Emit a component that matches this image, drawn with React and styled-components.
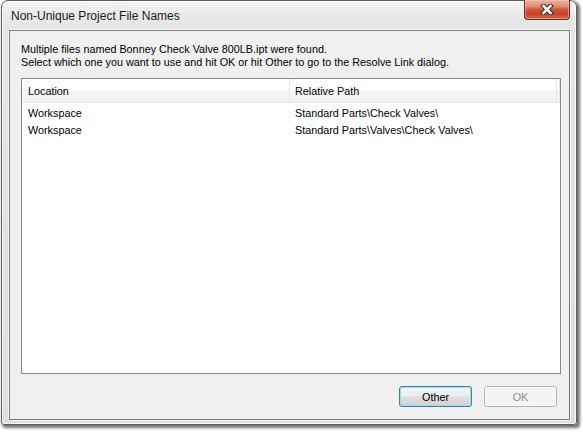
import React from 'react';
import styled, { createGlobalStyle } from 'styled-components';

const Global = createGlobalStyle`
  html, body { margin: 0; padding: 0; background: #ffffff; }
  body { font-family: "Liberation Sans", Arial, sans-serif; }
  * { box-sizing: border-box; }
`;

const Stage = styled.div`
  width: 583px;
  height: 432px;
  padding-left: 1px;
  overflow: hidden;
  background: #ffffff;
`;

const Window = styled.div`
  width: 576px;
  height: 425px;
  display: flex;
  flex-direction: column;
  border: 1px solid #5f5f5f;
  border-radius: 7px 7px 3px 3px;
  background: linear-gradient(#f4f4f4 0px, #e9e9e9 14px, #e4e4e4 30px, #dedede 100%);
  box-shadow: 2px 2px 3px 1px rgba(0, 0, 0, 0.55), inset 0 0 0 1px rgba(255, 255, 255, 0.85);
  padding: 0 6px 4px 7px;
`;

const TitleBar = styled.div`
  height: 29px;
  display: flex;
  align-items: flex-start;
  flex-shrink: 0;
`;

const Title = styled.div`
  align-self: center;
  flex: 1;
  padding-left: 2px;
  padding-top: 1px;
  font-size: 12px;
  color: #1a1a1a;
  white-space: nowrap;
`;

const CloseButton = styled.div`
  width: 46px;
  height: 20px;
  margin-top: -1px;
  display: flex;
  align-items: center;
  justify-content: center;
  border: 1px solid #6b2a1e;
  border-top: none;
  border-radius: 0 0 4px 4px;
  background: linear-gradient(#eab1a3 0%, #de8a75 35%, #d0543b 50%, #c6432a 75%, #d66b50 100%);
  box-shadow: inset 0 0 0 1px rgba(255, 210, 195, 0.45);
`;

const Client = styled.div`
  flex: 1;
  display: flex;
  flex-direction: column;
  border: 1px solid #7a7a7a;
  background: #f0f0f0;
  box-shadow: 0 0 0 1px rgba(255, 255, 255, 0.75);
  padding: 12px 8px 0 11px;
`;

const Message = styled.div`
  font-size: 10.8px;
  line-height: 13px;
  color: #000;
  white-space: nowrap;
`;

const List = styled.div`
  margin-top: 9px;
  width: 540px;
  height: 296px;
  border: 1px solid #828790;
  background: #ffffff;
  display: flex;
  flex-direction: column;
`;

const Columns = styled.div`
  display: grid;
  grid-template-columns: 268px 267px 1fr;
`;

const Header = styled(Columns)`
  height: 24px;
  border-bottom: 1px solid #e3e4e6;
  background: linear-gradient(#ffffff 0%, #ffffff 45%, #f6f7f8 50%, #f0f1f3 100%);
`;

const HeaderCell = styled.div`
  display: flex;
  align-items: center;
  padding-left: ${p => p.$pad}px;
  border-right: 1px solid #e3e5e8;
  font-size: 10.8px;
  color: #000;
  white-space: nowrap;
`;

const Rows = styled.div`
  padding-top: 1px;
`;

const Row = styled(Columns)`
  height: 17px;
`;

const Cell = styled.div`
  display: flex;
  align-items: center;
  padding-left: ${p => p.$pad}px;
  font-size: 10.8px;
  color: #000;
  white-space: nowrap;
`;

const ButtonBar = styled.div`
  margin-top: 12px;
  display: flex;
  justify-content: flex-end;
  gap: 12px;
  padding-right: 4px;
`;

const Button = styled.div`
  width: 73px;
  height: 21px;
  display: flex;
  align-items: center;
  justify-content: center;
  border-radius: 3px;
  font-size: 10.8px;
  border: 1px solid ${p => (p.$disabled ? '#b5b5b5' : '#3c7fb1')};
  color: ${p => (p.$disabled ? '#8d8d8d' : '#000')};
  background: ${p =>
    p.$disabled
      ? '#f4f4f4'
      : 'linear-gradient(#f3f3f3 0%, #ececec 48%, #dedede 52%, #d2d2d2 100%)'};
  box-shadow: ${p =>
    p.$disabled ? 'inset 0 0 0 1px #fbfbfb' : 'inset 0 0 0 1px #a6d6f0'};
`;

const CloseIcon = () => (
  <svg width="14" height="11" viewBox="0 0 14 11">
    <path d="M3.5 2 L10.5 9 M10.5 2 L3.5 9" stroke="#3a2a28" strokeWidth="4.6" strokeLinecap="square" fill="none" />
    <path d="M3.5 2 L10.5 9 M10.5 2 L3.5 9" stroke="#ffffff" strokeWidth="2.6" strokeLinecap="square" fill="none" />
  </svg>
);

const rows = [
  { location: 'Workspace', path: 'Standard Parts\\Check Valves\\' },
  { location: 'Workspace', path: 'Standard Parts\\Valves\\Check Valves\\' },
];

export default function App() {
  return (
    <>
      <Global />
      <Stage>
        <Window>
          <TitleBar>
            <Title>Non-Unique Project File Names</Title>
            <CloseButton>
              <CloseIcon />
            </CloseButton>
          </TitleBar>
          <Client>
            <Message>
              <div>Multiple files named Bonney Check Valve 800LB.ipt were found.</div>
              <div>Select which one you want to use and hit OK or hit Other to go to the Resolve Link dialog.</div>
            </Message>
            <List>
              <Header>
                <HeaderCell $pad={6}>Location</HeaderCell>
                <HeaderCell $pad={5}>Relative Path</HeaderCell>
                <HeaderCell $pad={0} />
              </Header>
              <Rows>
                {rows.map((r, i) => (
                  <Row key={i}>
                    <Cell $pad={6}>{r.location}</Cell>
                    <Cell $pad={5}>{r.path}</Cell>
                    <Cell $pad={0} />
                  </Row>
                ))}
              </Rows>
            </List>
            <ButtonBar>
              <Button>Other</Button>
              <Button $disabled>OK</Button>
            </ButtonBar>
          </Client>
        </Window>
      </Stage>
    </>
  );
}
